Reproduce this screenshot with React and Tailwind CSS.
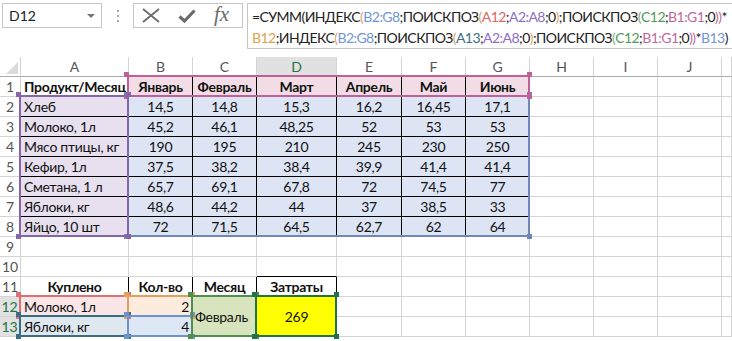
import { twMerge } from "tailwind-merge";

const colX = [0, 21, 129, 193, 257, 337, 402, 466, 530, 594, 658, 722];
const letters = ["A", "B", "C", "D", "E", "F", "G", "H", "I", "J", ""];
const months = ["Январь", "Февраль", "Март", "Апрель", "Май", "Июнь"];
const products = [
  ["Хлеб", "14,5", "14,8", "15,3", "16,2", "16,45", "17,1"],
  ["Молоко, 1л", "45,2", "46,1", "48,25", "52", "53", "53"],
  ["Мясо птицы, кг", "190", "195", "210", "245", "230", "250"],
  ["Кефир, 1л", "37,5", "38,2", "38,4", "39,9", "41,4", "41,4"],
  ["Сметана, 1 л", "65,7", "69,1", "67,8", "72", "74,5", "77"],
  ["Яблоки, кг", "48,6", "44,2", "44", "37", "38,5", "33"],
  ["Яйцо, 10 шт", "72", "71,5", "64,5", "62,7", "62", "64"],
];

function Cell({ className, children, span }) {
  return (
    <div
      className={twMerge(
        "flex items-center overflow-hidden whitespace-nowrap border-r border-b border-[#d4d4d4] px-[3px]",
        span && "row-span-2",
        className
      )}
    >
      {children}
    </div>
  );
}

function RowHead({ n, active }) {
  return (
    <Cell
      className={twMerge(
        "justify-center px-0 text-[14px] tracking-normal text-[#555]",
        active && "bg-[#e1e1e1] text-[#217346] border-r-2 border-r-[#217346]"
      )}
    >
      {n}
    </Cell>
  );
}

function Empty({ from = 8, black }) {
  const out = [];
  for (let c = from; c <= 11; c++) {
    out.push(
      <Cell
        key={c}
        className={black && c === 4 ? "border-b-black" : ""}
      />
    );
  }
  return out;
}

// reference highlight box drawn over the grid
function Ref({ c0, c1, r0, r1, color }) {
  const left = colX[c0] - 2;
  const top = 20 * r0 - 2;
  const width = colX[c1 + 1] - colX[c0] + 2;
  const height = 20 * (r1 - r0 + 1) + 2;
  const pts = [
    [left, top],
    [left + width, top],
    [left, top + height],
    [left + width, top + height],
  ];
  return (
    <>
      <div
        className="absolute border-2 pointer-events-none"
        style={{ left, top, width, height, borderColor: color }}
      />
      {pts.map(([x, y], i) => (
        <div
          key={i}
          className="absolute w-[5px] h-[5px]"
          style={{ left: x - 3, top: y - 3, background: color }}
        />
      ))}
    </>
  );
}

function Formula() {
  const blk = "text-[#222]";
  const seg = (t, c) => <span className={c}>{t}</span>;
  return (
    <div className="flex flex-col pl-[4px] pt-[2px] text-[14px] leading-[21px] whitespace-nowrap tracking-[-0.55px]">
      <div>
        {seg("=СУММ(ИНДЕКС", blk)}
        {seg("(", "text-[#e0a36a]")}
        {seg("B2:G8", "text-[#6f96d4]")}
        {seg(";ПОИСКПОЗ", blk)}
        {seg("(", "text-[#e0a36a]")}
        {seg("A12", "text-[#e0645f]")}
        {seg(";", blk)}
        {seg("A2:A8", "text-[#8c6fc4]")}
        {seg(";0", blk)}
        {seg(")", "text-[#e0a36a]")}
        {seg(";ПОИСКПОЗ", blk)}
        {seg("(", "text-[#7fb07f]")}
        {seg("C12", "text-[#4e9a56]")}
        {seg(";", blk)}
        {seg("B1:G1", "text-[#c0689c]")}
        {seg(";0", blk)}
        {seg("))", "text-[#c0689c]")}
        {seg("*", blk)}
      </div>
      <div>
        {seg("B12", "text-[#d9a24b]")}
        {seg(";ИНДЕКС", blk)}
        {seg("(", "text-[#e0a36a]")}
        {seg("B2:G8", "text-[#6f96d4]")}
        {seg(";ПОИСКПОЗ", blk)}
        {seg("(", "text-[#e0a36a]")}
        {seg("A13", "text-[#3a6f84]")}
        {seg(";", blk)}
        {seg("A2:A8", "text-[#8c6fc4]")}
        {seg(";0", blk)}
        {seg(")", "text-[#e0a36a]")}
        {seg(";ПОИСКПОЗ", blk)}
        {seg("(", "text-[#7fb07f]")}
        {seg("C12", "text-[#4e9a56]")}
        {seg(";", blk)}
        {seg("B1:G1", "text-[#c0689c]")}
        {seg(";0", blk)}
        {seg("))", "text-[#c0689c]")}
        {seg("*", blk)}
        {seg("B13", "text-[#6f96d4]")}
        {seg(")", blk)}
      </div>
    </div>
  );
}

export default function App() {
  const cells = [];

  // header row
  cells.push(
    <div
      key="corner"
      className="relative border-r border-b border-[#d4d4d4] border-b-[#ababab]"
    >
      <div className="absolute right-[2px] bottom-[2px] w-0 h-0 border-l-[12px] border-l-transparent border-b-[12px] border-b-[#dadada]" />
    </div>
  );
  letters.forEach((l, i) =>
    cells.push(
      <Cell
        key={"h" + i}
        className={twMerge(
          "justify-center text-[14px] tracking-normal text-[#555] border-b-[#ababab]",
          l === "D" &&
            "bg-[#e1e1e1] text-[#217346] border-b-2 border-b-[#217346]"
        )}
      >
        {l}
      </Cell>
    )
  );

  // row 1
  cells.push(<RowHead key="r1" n={1} />);
  cells.push(
    <Cell key="a1" className="font-bold border-black bg-white">
      Продукт/Месяц
    </Cell>
  );
  months.forEach((m) =>
    cells.push(
      <Cell
        key={"m" + m}
        className="justify-center font-bold border-black bg-[#f2dde6]"
      >
        {m}
      </Cell>
    )
  );
  cells.push(<Empty key="e1" />);

  // rows 2-8
  products.forEach((row, ri) => {
    cells.push(<RowHead key={"rh" + ri} n={ri + 2} />);
    row.forEach((v, ci) =>
      cells.push(
        <Cell
          key={ri + "-" + ci}
          className={
            ci === 0
              ? "border-black bg-[#e8dfef]"
              : "justify-center border-black bg-[#dde4f4]"
          }
        >
          {v}
        </Cell>
      )
    );
    cells.push(<Empty key={"e" + ri} />);
  });

  // rows 9-10
  cells.push(<RowHead key="r9" n={9} />);
  cells.push(<Empty key="e9" from={1} />);
  cells.push(<RowHead key="r10" n={10} />);
  cells.push(<Empty key="e10" from={1} black />);

  // row 11
  cells.push(<RowHead key="r11" n={11} />);
  ["Куплено", "Кол-во", "Месяц", "Затраты"].forEach((t) =>
    cells.push(
      <Cell key={t} className="justify-center font-bold border-r-black">
        {t}
      </Cell>
    )
  );
  cells.push(<Empty key="e11" from={5} />);

  // row 12
  cells.push(<RowHead key="r12" n={12} active />);
  cells.push(
    <Cell key="a12" className="bg-[#fbe6e7]">
      Молоко, 1л
    </Cell>
  );
  cells.push(
    <Cell key="b12" className="justify-end bg-[#fdebdd]">
      2
    </Cell>
  );
  cells.push(
    <Cell key="c12" span className="bg-[#d8e4bd] px-[2px]">
      Февраль
    </Cell>
  );
  cells.push(
    <Cell key="d12" span className="justify-center bg-[#ffff00]">
      269
    </Cell>
  );
  cells.push(<Empty key="e12" from={5} />);

  // row 13
  cells.push(<RowHead key="r13" n={13} active />);
  cells.push(
    <Cell key="a13" className="bg-[#dfe7ef]">
      Яблоки, кг
    </Cell>
  );
  cells.push(
    <Cell key="b13" className="justify-end bg-[#dee7f5]">
      4
    </Cell>
  );
  cells.push(<Empty key="e13" from={5} />);

  return (
    <div className="w-[732px] h-[341px] overflow-hidden bg-white font-['Lato','Open_Sans',sans-serif] text-[14px] tracking-[-0.3px] text-[#111]">
      {/* formula bar */}
      <div className="flex items-start h-[57px] pt-[3px] pl-[2px]">
        <div className="w-[100px] h-[25px] border border-[#c6c6c6] flex items-center justify-between pl-[6px] pr-[6px] text-[14px] tracking-normal text-[#222]">
          <span>D12</span>
          <span className="w-0 h-0 border-l-[4px] border-r-[4px] border-t-[4px] border-l-transparent border-r-transparent border-t-[#777]" />
        </div>
        <div className="w-[31px] flex flex-col items-center gap-[3px] pt-[7px]">
          <span className="w-[2px] h-[2px] bg-[#aaa]" />
          <span className="w-[2px] h-[2px] bg-[#aaa]" />
          <span className="w-[2px] h-[2px] bg-[#aaa]" />
        </div>
        <div className="w-[110px] h-[25px] border border-[#c6c6c6] flex items-center pl-[8px] gap-[18px] text-[#6b6b6b]">
          <svg width="18" height="15" viewBox="0 0 18 15">
            <path d="M1 1 L17 14 M17 1 L1 14" stroke="#6b6b6b" strokeWidth="1.8" fill="none" />
          </svg>
          <svg width="18" height="14" viewBox="0 0 18 14">
            <path d="M1.5 7.5 L6.5 12 L16.5 1.5" stroke="#6b6b6b" strokeWidth="3.2" fill="none" />
          </svg>
          <span className="font-['Liberation_Serif',serif] italic text-[21px] tracking-normal leading-none -mt-[2px]">
            fx
          </span>
        </div>
        <div className="ml-[4px] flex-1 h-[46px] border border-r-0 border-[#c6c6c6] overflow-hidden">
          <Formula />
        </div>
      </div>

      {/* grid */}
      <div className="relative">
        <div className="grid grid-cols-[21px_108px_64px_64px_80px_65px_64px_64px_64px_64px_64px_1fr] auto-rows-[20px]">
          {cells}
        </div>
        <Ref c0={2} c1={7} r0={2} r1={8} color="#7088b8" />
        <Ref c0={2} c1={7} r0={1} r1={1} color="#c0609a" />
        <Ref c0={1} c1={1} r0={2} r1={8} color="#8466a8" />
        <Ref c0={1} c1={1} r0={12} r1={12} color="#de6f72" />
        <Ref c0={1} c1={1} r0={13} r1={13} color="#386d82" />
        <Ref c0={2} c1={2} r0={12} r1={12} color="#e2a05a" />
        <Ref c0={2} c1={2} r0={13} r1={13} color="#6d93cf" />
        <Ref c0={3} c1={3} r0={12} r1={13} color="#4e8f4e" />
        <Ref c0={4} c1={4} r0={12} r1={13} color="#217346" />
      </div>
    </div>
  );
}
